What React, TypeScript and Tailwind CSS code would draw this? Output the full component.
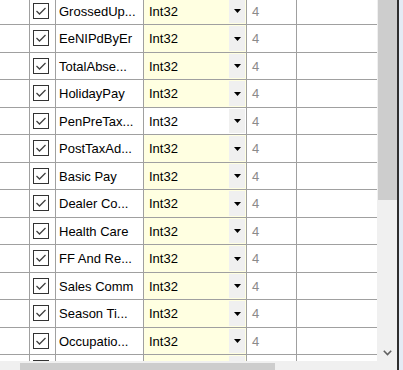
import React from "react";

type Row = { name: string; plain?: boolean };

const rows: Row[] = [
  { name: "GrossedUp..." },
  { name: "EeNIPdByEr" },
  { name: "TotalAbse..." },
  { name: "HolidayPay" },
  { name: "PenPreTax...", plain: true },
  { name: "PostTaxAd..." },
  { name: "Basic Pay" },
  { name: "Dealer Co..." },
  { name: "Health Care" },
  { name: "FF And Re..." },
  { name: "Sales Comm" },
  { name: "Season Ti..." },
  { name: "Occupatio..." },
  { name: "HIT Ee..." },
];

const CheckBox = () => (
  <div className="w-[16px] h-[16px] border border-[#333333] bg-white flex items-center justify-center">
    <svg width="14" height="14" viewBox="0 0 14 14">
      <path d="M2.5 7 L5.5 10 L11.5 4" fill="none" stroke="#404040" strokeWidth="1.3" />
    </svg>
  </div>
);

const GridRow = ({ row }: { row: Row }) => (
  <div className="flex h-[27.5px] shrink-0 border-b border-[#a0a0a0]">
    <div className="w-[30px] border-r border-[#a0a0a0]" />
    <div className="w-[26px] border-r border-[#a0a0a0] flex items-center pl-[3px]">
      <CheckBox />
    </div>
    <div className="w-[88px] border-r border-[#a0a0a0] flex items-center pl-[3px] pt-[1px] text-black whitespace-nowrap overflow-hidden">
      {row.name}
    </div>
    <div
      className={`w-[103px] border-r border-[#a0a0a0] flex items-center justify-between pl-[5px] pr-[1px] ${
        row.plain ? "bg-white" : "bg-[#ffffe1]"
      }`}
    >
      <span className="text-black pt-[1px]">Int32</span>
      <div className="w-[16px] self-stretch my-[1px] bg-[#f0f0f0] flex items-center justify-center pt-[1px]">
        <svg width="7" height="4" viewBox="0 0 7 4">
          <path d="M0 0 H7 L3.5 4 Z" fill="#000000" />
        </svg>
      </div>
    </div>
    <div className="w-[50px] border-r border-[#a0a0a0] flex items-center pl-[5px] pt-[1px] text-[#8a8a8a]">4</div>
    <div className="w-[80px]" />
  </div>
);

export default function App() {
  return (
    <div
      className="w-[403px] h-[370px] flex overflow-hidden bg-white text-[13px] leading-none"
      style={{ fontFamily: '"Liberation Sans", Arial, sans-serif' }}
    >
      <div className="flex flex-col w-[397px]">
        <div className="flex flex-1 min-h-0">
          <div className="w-[377px] overflow-hidden">
            <div className="flex flex-col -mt-[2.5px]">
              {rows.map((r) => (
                <GridRow key={r.name} row={r} />
              ))}
            </div>
          </div>
          <div className="w-[20px] bg-[#f0f0f0] flex flex-col">
            <div className="h-[200px] ml-[1px] w-[19px] bg-[#cdcdcd]" />
            <div className="flex-1" />
            <div className="h-[17px] flex items-center justify-center">
              <svg width="9" height="6" viewBox="0 0 9 6">
                <path d="M0.8 0.8 L4.5 4.5 L8.2 0.8" fill="none" stroke="#606060" strokeWidth="1.6" />
              </svg>
            </div>
          </div>
        </div>
        <div className="h-[9px] shrink-0 flex bg-[#f0f0f0]">
          <div className="w-[20px]" />
          <div className="w-[255px] mt-[2px] bg-[#cdcdcd]" />
          <div className="flex-1" />
        </div>
      </div>
      <div className="w-[2px] bg-[#2e2e2e]" />
      <div className="w-[4px] bg-[#e4ebf5]" />
    </div>
  );
}
